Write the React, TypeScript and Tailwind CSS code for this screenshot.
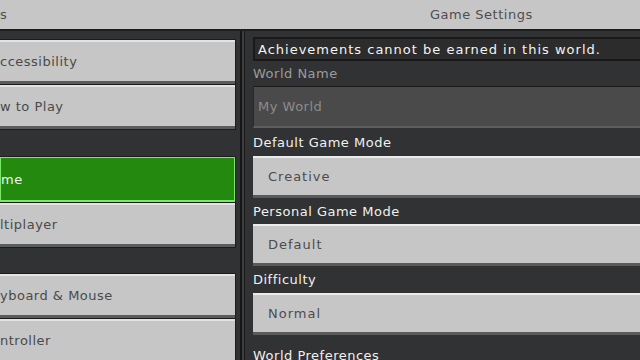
import React from "react";

function NavButton({ hidden, shown, active }: { hidden: string; shown: string; active?: boolean }) {
  const cls = active
    ? "h-[45px] flex items-center bg-[#248a0f] border border-[#7ae868] border-b-2 text-[#f4f4f4]"
    : "h-[44px] flex items-center bg-[#c6c6c6] border-t-2 border-t-[#e3e3e3] border-b-[3px] border-b-[#5c5c5c] text-[#4a4a4a]";
  return (
    <div className={cls}>
      <span className="relative whitespace-nowrap">
        <span className="absolute right-full">{hidden}</span>
        {shown}
      </span>
    </div>
  );
}

function Group({ children, className = "" }: { children: React.ReactNode; className?: string }) {
  return (
    <div className={"w-[236px] flex flex-col gap-px bg-[#1c1c1d] border-y border-r border-[#1c1c1d] " + className}>
      {children}
    </div>
  );
}

function Label({ text, className = "", dim }: { text: string; className?: string; dim?: boolean }) {
  return (
    <div className={"flex items-center whitespace-nowrap " + (dim ? "text-[#9c9c9c] " : "text-[#f0f0f0] ") + className}>
      {text}
    </div>
  );
}

function Dropdown({ value }: { value: string }) {
  return (
    <div className="h-[42px] flex items-center pl-[15px] bg-[#c6c6c6] border-t-2 border-t-[#ebebeb] border-b-[3px] border-b-[#5a5a5a] text-[#4c4c4c] tracking-[1px]">
      {value}
    </div>
  );
}

export default function App() {
  return (
    <div className="w-[640px] h-[360px] overflow-hidden bg-[#313233] flex flex-col text-[13px] leading-none tracking-[0.5px] font-['DejaVu_Sans','Liberation_Sans',sans-serif]">
      <header className="h-[31px] shrink-0 bg-[#c6c6c6] border-b-2 border-b-[#1e1e1f] flex items-center text-[#4e4e4e]">
        <div className="w-[240px] shrink-0">
          <span className="relative whitespace-nowrap">
            <span className="absolute right-full">Setting</span>s
          </span>
        </div>
        <div className="pl-[190px] whitespace-nowrap">Game Settings</div>
      </header>
      <div className="flex flex-1 min-h-0">
        <nav className="w-[240px] shrink-0 pt-[8px] flex flex-col">
          <Group>
            <NavButton hidden="A" shown="ccessibility" />
            <NavButton hidden="Ho" shown="w to Play" />
          </Group>
          <Group className="mt-[26px]">
            <NavButton hidden="Ga" shown="me" active />
            <NavButton hidden="Mu" shown="ltiplayer" />
          </Group>
          <Group className="mt-[25px]">
            <NavButton hidden="Ke" shown="yboard & Mouse" />
            <NavButton hidden="Co" shown="ntroller" />
          </Group>
        </nav>
        <div className="w-[2px] shrink-0 bg-[#161617]" />
        <div className="w-[2px] shrink-0 bg-[#3e3e3f]" />
        <div className="w-px shrink-0 bg-[#1a1a1b]" />
        <main className="flex-1 min-w-0 overflow-hidden pl-[8px] pt-[6px]">
          <div className="w-[460px] flex flex-col">
            <div className="h-[24px] flex items-center pl-[3px] border-2 border-[#19191a] bg-[#2c2c2d] text-[#f4f4f4] whitespace-nowrap tracking-[1px]">
              Achievements cannot be earned in this world.
            </div>
            <Label text="World Name" dim className="h-[25px]" />
            <div className="h-[42px] flex items-center pl-[4px] bg-[#4a4a4b] border-t border-t-[#1c1c1d] border-l border-l-[#2a2a2b] border-b-2 border-b-[#5e5e5f] text-[#8c8c8c]">
              My World
            </div>
            <Label text="Default Game Mode" className="h-[28px]" />
            <Dropdown value="Creative" />
            <Label text="Personal Game Mode" className="h-[26px]" />
            <Dropdown value="Default" />
            <Label text="Difficulty" className="h-[27px]" />
            <Dropdown value="Normal" />
            <Label text="World Preferences" className="h-[40px]" />
          </div>
        </main>
      </div>
    </div>
  );
}
